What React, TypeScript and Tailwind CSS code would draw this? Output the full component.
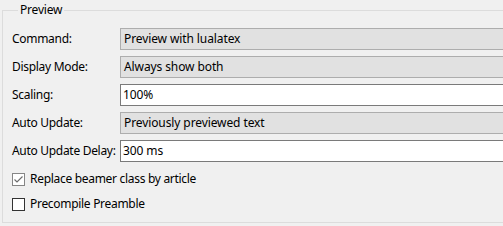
import React from "react";

const font = { fontFamily: '"Noto Sans", "Segoe UI", sans-serif' };

function Row({ label, value, kind }: { label: string; value: string; kind: "combo" | "edit" }) {
  return (
    <div className="flex items-center h-[22px]">
      <div className="w-[108px] shrink-0 text-[12px] tracking-[-0.3px] text-black leading-none whitespace-nowrap">{label}</div>
      {kind === "combo" ? (
        <div className="h-[22px] w-[420px] border border-[#adadad] bg-[#e1e1e1] flex items-center pl-[3px] text-[12px] tracking-[-0.1px] text-black whitespace-nowrap">
          {value}
        </div>
      ) : (
        <div className="h-[22px] w-[420px] border border-[#7a7a7a] bg-white flex items-center pl-[2px] text-[12px] tracking-[-0.1px] text-black whitespace-nowrap">
          {value}
        </div>
      )}
    </div>
  );
}

function Check({ label, checked }: { label: string; checked?: boolean }) {
  return (
    <div className="flex items-center h-[16px]">
      <div
        className={
          "w-[13px] h-[13px] border bg-white flex items-center justify-center shrink-0 " +
          (checked ? "border-[#868686]" : "border-[#333333]")
        }
      >
        {checked && (
          <svg width="11" height="11" viewBox="0 0 11 11">
            <path d="M1.5 5.5 L4 8 L9.5 2.5" stroke="#6d6d6d" strokeWidth="1.2" fill="none" />
          </svg>
        )}
      </div>
      <span className="ml-[5px] text-[12px] tracking-[-0.3px] text-black whitespace-nowrap">{label}</span>
    </div>
  );
}

export default function App() {
  return (
    <div className="w-[503px] h-[226px] bg-[#f0f0f0] overflow-hidden relative" style={font}>
      <fieldset className="ml-[2px] mt-[2px] w-[560px] h-[221px] border border-[#dcdcdc] pl-[9px] pt-[10px] m-0 p-0">
        <legend className="ml-[6px] px-[2px] text-[12px] tracking-[-0.2px] text-black leading-[16px]">Preview</legend>
        <div className="flex flex-col gap-[6px]">
          <Row label="Command:" value="Preview with lualatex" kind="combo" />
          <Row label="Display Mode:" value="Always show both" kind="combo" />
          <Row label="Scaling:" value="100%" kind="edit" />
          <Row label="Auto Update:" value="Previously previewed text" kind="combo" />
          <Row label="Auto Update Delay:" value="300 ms" kind="edit" />
        </div>
        <div className="flex flex-col gap-[9px] mt-[9px]">
          <Check label="Replace beamer class by article" checked />
          <Check label="Precompile Preamble" />
        </div>
      </fieldset>
    </div>
  );
}
